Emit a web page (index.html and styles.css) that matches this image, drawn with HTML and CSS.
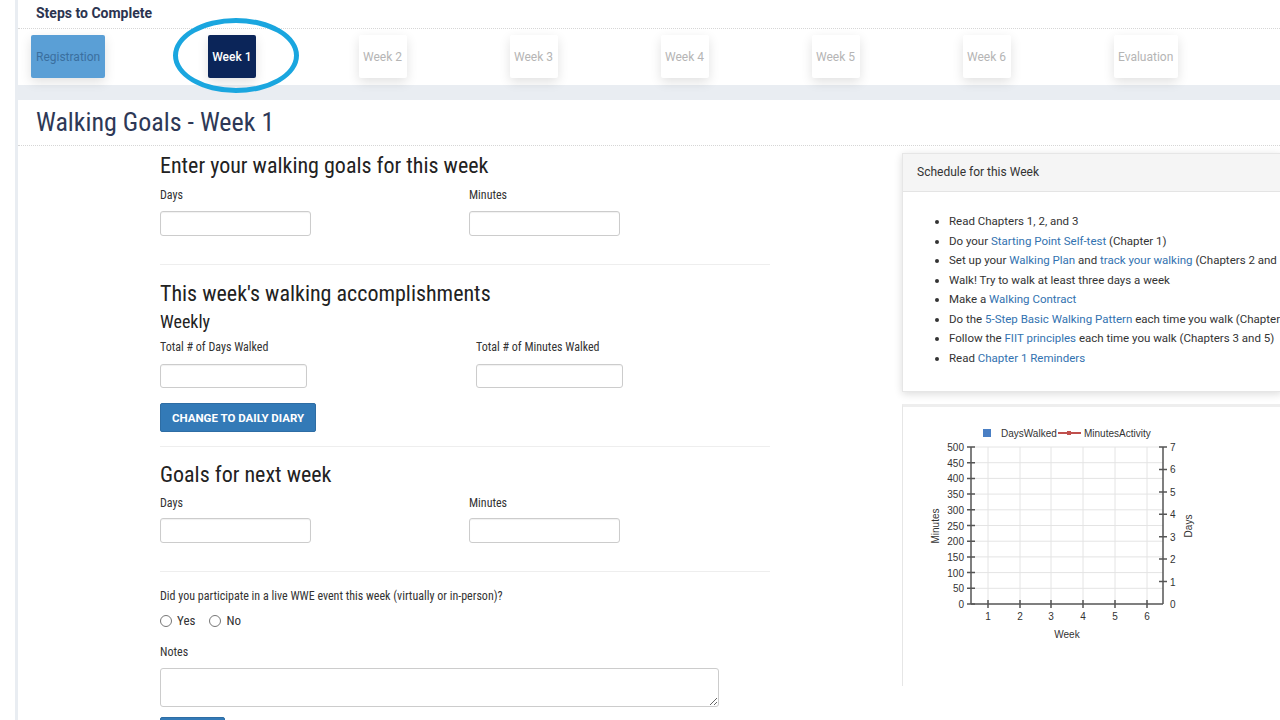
FILE: index.html
```html
<!DOCTYPE html>
<html lang="en">
  <head>
    <meta charset="UTF-8" />
    <meta name="viewport" content="width=device-width, initial-scale=1.0" />
    <title>Walking Goals - Week 1</title>
    <link rel="stylesheet" href="styles.css">
  </head>
  <body>
    <div class="shell">
      <!-- Steps -->
      <div class="steps-card">
        <div class="steps-title">Steps to Complete</div>
        <div class="steps">
          <div class="step done">Registration</div>
          <div class="step current">Week 1<span class="ring"></span></div>
          <div class="step">Week 2</div>
          <div class="step">Week 3</div>
          <div class="step">Week 4</div>
          <div class="step">Week 5</div>
          <div class="step">Week 6</div>
          <div class="step">Evaluation</div>
        </div>
      </div>

      <!-- Main -->
      <div class="main-card">
        <h1 class="page-title">Walking Goals - Week 1</h1>
        <div class="content">
          <div class="form-col">
            <section class="block">
              <h3>Enter your walking goals for this week</h3>
              <div class="pair">
                <div class="field">
                  <label>Days</label>
                  <input type="text" />
                </div>
                <div class="field">
                  <label>Minutes</label>
                  <input type="text" />
                </div>
              </div>
            </section>

            <section class="block diary">
              <h3>This week's walking accomplishments</h3>
              <h4>Weekly</h4>
              <div class="pair wide">
                <div class="field">
                  <label>Total # of Days Walked</label>
                  <input type="text" class="short" />
                </div>
                <div class="field">
                  <label>Total # of Minutes Walked</label>
                  <input type="text" class="short" />
                </div>
              </div>
              <button class="btn">Change to Daily Diary</button>
            </section>

            <section class="block next">
              <h3>Goals for next week</h3>
              <div class="pair">
                <div class="field">
                  <label>Days</label>
                  <input type="text" />
                </div>
                <div class="field">
                  <label>Minutes</label>
                  <input type="text" />
                </div>
              </div>
            </section>

            <section class="block last">
              <p class="question">Did you participate in a live WWE event this week (virtually or in-person)?</p>
              <div class="radios">
                <label><input type="radio" name="wwe" /> Yes</label>
                <label><input type="radio" name="wwe" /> No</label>
              </div>
              <label class="notes-label">Notes</label>
              <textarea></textarea>
              <button class="btn save"></button>
            </section>
          </div>

          <div class="side-col">
            <div class="panel">
              <div class="panel-head">Schedule for this Week</div>
              <ul class="panel-body">
                <li>Read Chapters 1, 2, and 3</li>
                <li>Do your <a href="#">Starting Point Self-test</a> (Chapter 1)</li>
                <li>Set up your <a href="#">Walking Plan</a> and <a href="#">track your walking</a> (Chapters 2 and</li>
                <li>Walk! Try to walk at least three days a week</li>
                <li>Make a <a href="#">Walking Contract</a></li>
                <li>Do the <a href="#">5-Step Basic Walking Pattern</a> each time you walk (Chapter</li>
                <li>Follow the <a href="#">FIIT principles</a> each time you walk (Chapters 3 and 5)</li>
                <li>Read <a href="#">Chapter 1 Reminders</a></li>
              </ul>
            </div>

            <div class="chart-card">
              <svg width="378" height="282" viewBox="0 0 378 282" class="chart">
                <!-- grid -->
                <g stroke="#e4e4e4" stroke-width="1">
                  <line x1="68" y1="43" x2="260" y2="43" />
                  <line x1="68" y1="58.7" x2="260" y2="58.7" />
                  <line x1="68" y1="74.4" x2="260" y2="74.4" />
                  <line x1="68" y1="90.1" x2="260" y2="90.1" />
                  <line x1="68" y1="105.8" x2="260" y2="105.8" />
                  <line x1="68" y1="121.5" x2="260" y2="121.5" />
                  <line x1="68" y1="137.2" x2="260" y2="137.2" />
                  <line x1="68" y1="152.9" x2="260" y2="152.9" />
                  <line x1="68" y1="168.6" x2="260" y2="168.6" />
                  <line x1="68" y1="184.3" x2="260" y2="184.3" />
                  <line x1="85" y1="43" x2="85" y2="200" />
                  <line x1="117" y1="43" x2="117" y2="200" />
                  <line x1="148" y1="43" x2="148" y2="200" />
                  <line x1="180" y1="43" x2="180" y2="200" />
                  <line x1="212" y1="43" x2="212" y2="200" />
                  <line x1="244" y1="43" x2="244" y2="200" />
                </g>
                <!-- axes -->
                <g stroke="#555" stroke-width="1.5" fill="none">
                  <line x1="68" y1="43" x2="68" y2="200" />
                  <line x1="260" y1="43" x2="260" y2="200" />
                  <line x1="68" y1="200" x2="260" y2="200" />
                  <path d="M64 43h8M64 58.7h8M64 74.4h8M64 90.1h8M64 105.8h8M64 121.5h8M64 137.2h8M64 152.9h8M64 168.6h8M64 184.3h8M64 200h8" />
                  <path d="M256 43h8M256 65.4h8M256 87.9h8M256 110.3h8M256 132.7h8M256 155.1h8M256 177.6h8" />
                  <path d="M85 196v8M117 196v8M148 196v8M180 196v8M212 196v8M244 196v8" />
                </g>
                <g class="ticks" text-anchor="end">
                  <text x="61" y="47">500</text>
                  <text x="61" y="62.7">450</text>
                  <text x="61" y="78.4">400</text>
                  <text x="61" y="94.1">350</text>
                  <text x="61" y="109.8">300</text>
                  <text x="61" y="125.5">250</text>
                  <text x="61" y="141.2">200</text>
                  <text x="61" y="156.9">150</text>
                  <text x="61" y="172.6">100</text>
                  <text x="61" y="188.3">50</text>
                  <text x="61" y="204">0</text>
                </g>
                <g class="ticks">
                  <text x="267" y="47">7</text>
                  <text x="267" y="69.4">6</text>
                  <text x="267" y="91.9">5</text>
                  <text x="267" y="114.3">4</text>
                  <text x="267" y="136.7">3</text>
                  <text x="267" y="159.1">2</text>
                  <text x="267" y="181.6">1</text>
                  <text x="267" y="204">0</text>
                </g>
                <g class="ticks" text-anchor="middle">
                  <text x="85" y="216">1</text>
                  <text x="117" y="216">2</text>
                  <text x="148" y="216">3</text>
                  <text x="180" y="216">4</text>
                  <text x="212" y="216">5</text>
                  <text x="244" y="216">6</text>
                  <text x="164" y="234">Week</text>
                  <text transform="translate(36 122) rotate(-90)">Minutes</text>
                  <text transform="translate(289 122) rotate(-90)">Days</text>
                </g>
                <!-- legend -->
                <rect x="80" y="25" width="8" height="8" fill="#4a7fc4" />
                <text class="ticks" x="98" y="33">DaysWalked</text>
                <line x1="155" y1="29" x2="178" y2="29" stroke="#c0504d" stroke-width="2" />
                <rect x="164" y="27" width="4" height="4" fill="#c0504d" />
                <text class="ticks" x="181" y="33">MinutesActivity</text>
              </svg>
            </div>
          </div>
        </div>
      </div>
    </div>
  </body>
</html>
```

FILE: styles.css
```css
* {
  margin: 0;
  padding: 0;
  box-sizing: border-box;
}

body {
  background: #fff;
  font-family: Roboto, "Liberation Sans", sans-serif;
  color: #333;
  width: 1280px;
  height: 720px;
  overflow: hidden;
}

.shell {
  margin-left: 15px;
  padding-left: 3px;
  background: #e9edf2;
  width: 1265px;
  min-height: 720px;
  display: flex;
  flex-direction: column;
  gap: 15px;
  overflow: hidden;
}

/* steps */

.steps-card {
  background: #fff;
  height: 85px;
}

.steps-title {
  height: 29px;
  padding: 5px 0 0 18px;
  font-size: 14px;
  font-weight: 700;
  color: #2c3450;
  border-bottom: 1px dotted #d6d6d6;
}

.steps {
  display: flex;
  gap: 103px;
  padding: 6px 0 0 13px;
}

.step {
  position: relative;
  height: 43px;
  padding: 0 4.5px;
  display: flex;
  align-items: center;
  font-size: 12px;
  color: #b5b5b5;
  background: #fff;
  box-shadow: 0 4px 12px rgba(0, 0, 0, 0.12);
  border-radius: 2px;
  white-space: nowrap;
}

.step.done {
  background: #5a9fd6;
  color: #3a6f9f;
  padding: 0 5px;
}

.step.current {
  background: #0b2559;
  color: #fff;
  font-weight: 500;
  padding: 0 4px;
}

.ring {
  position: absolute;
  left: -35px;
  top: -17px;
  width: 126px;
  height: 75px;
  border: 5px solid #1aa6df;
  border-radius: 50%;
}

/* main card */

.main-card {
  background: #fff;
  flex: 1;
}

.page-title {
  height: 46px;
  padding: 7px 0 0 18px;
  font-family: "Roboto Condensed", "Liberation Sans Narrow", Roboto, sans-serif;
  font-size: 26px;
  font-weight: 400;
  color: #2e3856;
  border-bottom: 1px dotted #d6d6d6;
}

.content {
  display: flex;
  padding-left: 142px;
}

.form-col {
  flex: none;
  width: 610px;
  font-family: "Roboto Condensed", "Liberation Sans Narrow", Roboto, sans-serif;
  color: #222;
}

.block {
  padding: 8px 0 28px;
  border-bottom: 1px solid #eee;
}

.block + .block {
  padding-top: 16px;
}

.block.diary {
  padding-top: 17px;
  padding-bottom: 14px;
}

.block.next .pair {
  margin-top: 8px;
}

.block.next .field input {
  margin-top: 7px;
}

.block.last {
  padding-top: 16px;
  border-bottom: none;
}

h3 {
  font-size: 22px;
  font-weight: 400;
  line-height: 24px;
}

h4 {
  font-size: 18px;
  font-weight: 400;
  line-height: 20px;
  margin-top: 6px;
}

label {
  display: block;
  font-size: 12px;
  line-height: 16px;
  color: #333;
}

.pair {
  display: grid;
  grid-template-columns: 309px 1fr;
  margin-top: 9px;
}

.pair.wide {
  grid-template-columns: 316px 1fr;
  margin-top: 7px;
}

.field input {
  display: block;
  margin-top: 8px;
  width: 151px;
  height: 25px;
  border: 1px solid #ccc;
  border-radius: 3px;
  box-shadow: inset 0 1px 1px rgba(0, 0, 0, 0.06);
}

.field input.short {
  width: 147px;
  height: 24px;
  margin-top: 9px;
}

.btn {
  display: block;
  margin-top: 15px;
  height: 29px;
  padding: 0 11px;
  background: #337ab7;
  color: #fff;
  border: 1px solid #2e6da4;
  border-radius: 2px;
  font-family: Roboto, "Liberation Sans", sans-serif;
  font-size: 11.5px;
  font-weight: 700;
  text-transform: uppercase;
}

.question {
  font-size: 12px;
  line-height: 16px;
  color: #333;
}

.radios {
  display: flex;
  gap: 14px;
  margin-top: 9px;
}

.radios label {
  display: flex;
  align-items: center;
  gap: 5px;
  font-size: 13px;
}

.radios input {
  width: 12px;
  height: 12px;
  margin: 0;
}

.notes-label {
  margin-top: 15px;
}

textarea {
  display: block;
  margin-top: 8px;
  width: 559px;
  height: 39px;
  border: 1px solid #ccc;
  border-radius: 3px;
}

.btn.save {
  margin-top: 10px;
  width: 65px;
}

/* side column */

.side-col {
  flex: none;
  margin-left: 132px;
  width: 380px;
  display: flex;
  flex-direction: column;
  gap: 12px;
}

.panel {
  margin-top: 7px;
  background: #fff;
  border: 1px solid #e6e6e6;
  box-shadow: 0 2px 8px rgba(0, 0, 0, 0.14);
}

.panel-head {
  height: 38px;
  padding: 11px 0 0 14px;
  background: #f5f5f5;
  border-bottom: 1px solid #e4e4e4;
  font-size: 12px;
  color: #333;
}

.panel-body {
  padding: 20px 0 23px 46px;
  font-size: 11.5px;
  line-height: 19.5px;
  color: #333;
}

.panel-body li {
  white-space: nowrap;
}

.panel-body a {
  color: #3272b0;
  text-decoration: none;
}

.chart-card {
  height: 282px;
  border-top: 3px solid #eee;
  border-left: 1px solid #e6e6e6;
  background: #fff;
}

.chart {
  display: block;
  margin-top: -3px;
}

.ticks {
  font-family: "Liberation Sans", Arial, sans-serif;
  font-size: 10px;
  fill: #333;
}
```
